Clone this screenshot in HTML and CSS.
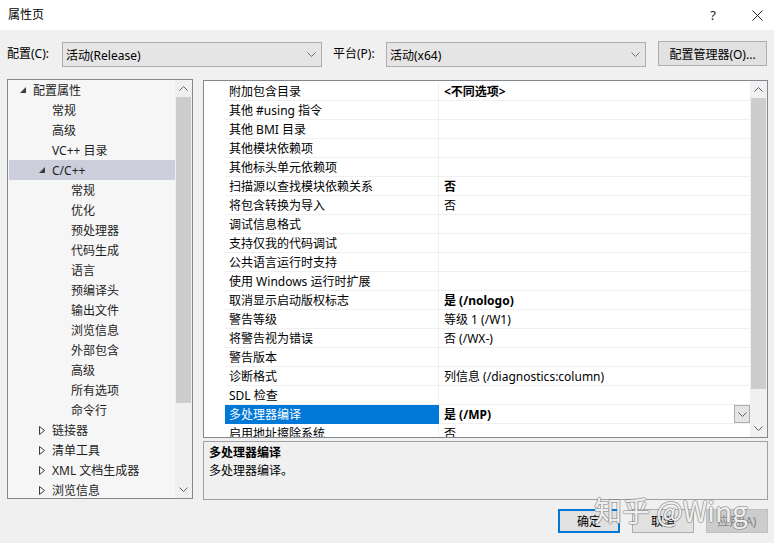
FILE: index.html
```html
<!DOCTYPE html>
<html lang="zh-CN">
<head>
<meta charset="utf-8">
<title>属性页</title>
<link rel="stylesheet" href="styles.css">
</head>
<body>
<div class="window">
  <div class="titlebar">
    <span class="title">属性页</span>
    <span class="tb-help">?</span>
    <span class="tb-close"><svg width="11" height="11" viewBox="0 0 11 11"><path d="M0.5 0.5 L10.5 10.5 M10.5 0.5 L0.5 10.5" stroke="#222" stroke-width="1" fill="none"/></svg></span>
  </div>
  <div class="body">
    <div class="toolbar">
      <span class="lbl lbl-config">配置(C):</span>
      <div class="combo"><span class="combo-text">活动(Release)</span><svg class="chev" width="9" height="5" viewBox="0 0 9 5"><polyline points="0.5,0.5 4.5,4.5 8.5,0.5" stroke="#707070" fill="none"/></svg></div>
      <span class="lbl lbl-platform">平台(P):</span>
      <div class="combo"><span class="combo-text">活动(x64)</span><svg class="chev" width="9" height="5" viewBox="0 0 9 5"><polyline points="0.5,0.5 4.5,4.5 8.5,0.5" stroke="#707070" fill="none"/></svg></div>
      <button class="btn btn-mgr">配置管理器(O)...</button>
    </div>
    <div class="content">
      <div class="tree">
        <div class="tree-rows">
          <div class="trow l0"><span class="tog"><svg width="6" height="6" viewBox="0 0 6 6"><polygon points="6,0 6,6 0,6" fill="#3c3c3c"/></svg></span>配置属性</div>
          <div class="trow l1"><span class="tog"></span>常规</div>
          <div class="trow l1"><span class="tog"></span>高级</div>
          <div class="trow l1"><span class="tog"></span>VC++ 目录</div>
          <div class="trow l1 sel"><span class="tog"><svg width="6" height="6" viewBox="0 0 6 6"><polygon points="6,0 6,6 0,6" fill="#3c3c3c"/></svg></span>C/C++</div>
          <div class="trow l2"><span class="tog"></span>常规</div>
          <div class="trow l2"><span class="tog"></span>优化</div>
          <div class="trow l2"><span class="tog"></span>预处理器</div>
          <div class="trow l2"><span class="tog"></span>代码生成</div>
          <div class="trow l2"><span class="tog"></span>语言</div>
          <div class="trow l2"><span class="tog"></span>预编译头</div>
          <div class="trow l2"><span class="tog"></span>输出文件</div>
          <div class="trow l2"><span class="tog"></span>浏览信息</div>
          <div class="trow l2"><span class="tog"></span>外部包含</div>
          <div class="trow l2"><span class="tog"></span>高级</div>
          <div class="trow l2"><span class="tog"></span>所有选项</div>
          <div class="trow l2"><span class="tog"></span>命令行</div>
          <div class="trow l1"><span class="tog"><svg width="6" height="9" viewBox="0 0 6 9"><polygon points="0.5,0.5 5.5,4.5 0.5,8.5" fill="none" stroke="#3c3c3c"/></svg></span>链接器</div>
          <div class="trow l1"><span class="tog"><svg width="6" height="9" viewBox="0 0 6 9"><polygon points="0.5,0.5 5.5,4.5 0.5,8.5" fill="none" stroke="#3c3c3c"/></svg></span>清单工具</div>
          <div class="trow l1"><span class="tog"><svg width="6" height="9" viewBox="0 0 6 9"><polygon points="0.5,0.5 5.5,4.5 0.5,8.5" fill="none" stroke="#3c3c3c"/></svg></span>XML 文档生成器</div>
          <div class="trow l1"><span class="tog"><svg width="6" height="9" viewBox="0 0 6 9"><polygon points="0.5,0.5 5.5,4.5 0.5,8.5" fill="none" stroke="#3c3c3c"/></svg></span>浏览信息</div>
        </div>
        <div class="vscroll tree-scroll">
          <div class="arrow"><svg width="9" height="5" viewBox="0 0 9 5"><polyline points="0.5,4.5 4.5,0.5 8.5,4.5" stroke="#606060" fill="none"/></svg></div>
          <div class="thumb tree-thumb"></div>
          <div class="track"></div>
          <div class="arrow"><svg width="9" height="5" viewBox="0 0 9 5"><polyline points="0.5,0.5 4.5,4.5 8.5,0.5" stroke="#606060" fill="none"/></svg></div>
        </div>
      </div>
      <div class="right">
        <div class="grid">
          <div class="grid-rows">
            <div class="grow"><span class="gut"></span><span class="gname">附加包含目录</span><span class="gval b">&lt;不同选项&gt;</span></div>
            <div class="grow"><span class="gut"></span><span class="gname">其他 #using 指令</span><span class="gval"></span></div>
            <div class="grow"><span class="gut"></span><span class="gname">其他 BMI 目录</span><span class="gval"></span></div>
            <div class="grow"><span class="gut"></span><span class="gname">其他模块依赖项</span><span class="gval"></span></div>
            <div class="grow"><span class="gut"></span><span class="gname">其他标头单元依赖项</span><span class="gval"></span></div>
            <div class="grow"><span class="gut"></span><span class="gname">扫描源以查找模块依赖关系</span><span class="gval b">否</span></div>
            <div class="grow"><span class="gut"></span><span class="gname">将包含转换为导入</span><span class="gval">否</span></div>
            <div class="grow"><span class="gut"></span><span class="gname">调试信息格式</span><span class="gval"></span></div>
            <div class="grow"><span class="gut"></span><span class="gname">支持仅我的代码调试</span><span class="gval"></span></div>
            <div class="grow"><span class="gut"></span><span class="gname">公共语言运行时支持</span><span class="gval"></span></div>
            <div class="grow"><span class="gut"></span><span class="gname">使用 Windows 运行时扩展</span><span class="gval"></span></div>
            <div class="grow"><span class="gut"></span><span class="gname">取消显示启动版权标志</span><span class="gval b">是 (/nologo)</span></div>
            <div class="grow"><span class="gut"></span><span class="gname">警告等级</span><span class="gval">等级 1 (/W1)</span></div>
            <div class="grow"><span class="gut"></span><span class="gname">将警告视为错误</span><span class="gval">否 (/WX-)</span></div>
            <div class="grow"><span class="gut"></span><span class="gname">警告版本</span><span class="gval"></span></div>
            <div class="grow"><span class="gut"></span><span class="gname">诊断格式</span><span class="gval">列信息 (/diagnostics:column)</span></div>
            <div class="grow"><span class="gut"></span><span class="gname">SDL 检查</span><span class="gval"></span></div>
            <div class="grow sel"><span class="gut"></span><span class="gname">多处理器编译</span><span class="gval b"><span class="vtext">是 (/MP)</span><span class="ddbtn"><svg width="9" height="5" viewBox="0 0 9 5"><polyline points="0.5,0.5 4.5,4.5 8.5,0.5" stroke="#606060" fill="none"/></svg></span></span></div>
            <div class="grow"><span class="gut"></span><span class="gname">启用地址擦除系统</span><span class="gval">否</span></div>
          </div>
          <div class="vscroll grid-scroll">
            <div class="arrow"><svg width="9" height="5" viewBox="0 0 9 5"><polyline points="0.5,4.5 4.5,0.5 8.5,4.5" stroke="#606060" fill="none"/></svg></div>
            <div class="thumb grid-thumb"></div>
            <div class="track"></div>
            <div class="arrow"><svg width="9" height="5" viewBox="0 0 9 5"><polyline points="0.5,0.5 4.5,4.5 8.5,0.5" stroke="#606060" fill="none"/></svg></div>
          </div>
        </div>
        <div class="desc">
          <div class="desc-title">多处理器编译</div>
          <div class="desc-text">多处理器编译。</div>
        </div>
      </div>
    </div>
    <div class="footer">
      <button class="btn btn-ok">确定</button>
      <button class="btn">取消</button>
      <button class="btn btn-dis">应用(A)</button>
    </div>
  </div>
  <div class="watermark">知乎 @Wing</div>
</div>
</body>
</html>
```

FILE: styles.css
```css
* { box-sizing: border-box; margin: 0; padding: 0; }
html, body { width: 774px; height: 543px; overflow: hidden; }
body {
  font-family: "Noto Sans", "Noto Sans CJK SC", sans-serif;
  font-size: 12px;
  color: #000;
  background: #f0f0f0;
}
.window { position: relative; width: 774px; height: 543px; display: flex; flex-direction: column; }

.titlebar { height: 30px; background: #fff; display: flex; align-items: center; padding-left: 8px; padding-right: 7px; }
.title { flex: 1; line-height: 16px; }
.tb-help { width: 20px; text-align: center; font-size: 13px; color: #222; margin-right: 24px; }
.tb-close { width: 20px; display: flex; justify-content: center; }

.body { flex: 1; display: flex; flex-direction: column; padding: 0 6px 0 7px; }

.toolbar { display: flex; align-items: flex-start; margin-top: 11px; height: 26px; }
.lbl { line-height: 26px; }
.lbl-config { width: 55px; }
.lbl-platform { width: 53px; margin-left: 11px; }
.combo {
  width: 260px; height: 25px; margin-top: 1px;
  background: #e5e5e5; border: 1px solid #adadad;
  display: flex; align-items: center; padding-left: 3px; padding-right: 5px;
}
.combo-text { flex: 1; }
.btn {
  font-family: inherit; font-size: 12px; color: #000;
  background: #e1e1e1; border: 1px solid #adadad;
  height: 24px; width: 62px;
}
.btn-mgr { width: 109px; height: 25px; margin-left: 12px; }

.content { display: flex; gap: 10px; margin-top: 12px; height: 421px; }

.tree { width: 186px; height: 420px; border: 1px solid #828790; background: #f6f6f6; display: flex; }
.tree-rows { flex: 1; overflow: hidden; color: #1e1e1e; }
.trow { height: 20px; display: flex; align-items: center; white-space: nowrap; }
.trow.l0 { padding-left: 10px; }
.trow.l1 { padding-left: 29px; }
.trow.l2 { padding-left: 48px; }
.trow.sel { background: #cccedb; margin-left: 1px; padding-left: 28px; }
.tog { width: 15px; height: 20px; display: flex; align-items: center; padding-left: 2px; flex: none; }

.vscroll { width: 17px; background: #f0f0f0; display: flex; flex-direction: column; align-items: center; flex: none; }
.arrow { height: 17px; width: 17px; display: flex; align-items: center; justify-content: center; flex: none; }
.thumb { width: 15px; background: #cdcdcd; flex: none; }
.track { flex: 1; }
.tree-thumb { height: 306px; }
.grid-thumb { height: 291px; }

.right { width: 565px; display: flex; flex-direction: column; gap: 3px; }
.grid { margin-top: 1px; height: 358px; border: 1px solid #828790; background: #fff; display: flex; }
.grid-rows { flex: 1; overflow: hidden; padding-top: 1px; }
.grow { height: 19px; display: flex; white-space: nowrap; }
.gut { width: 21px; flex: none; }
.gname {
  width: 214px; flex: none; padding-left: 4px; line-height: 19px;
  border-bottom: 1px solid #f0f0f0; border-right: 1px solid #f0f0f0;
}
.gval { flex: 1; padding-left: 5px; line-height: 19px; border-bottom: 1px solid #f0f0f0; display: flex; align-items: center; }
.gval.b { font-weight: bold; }
.grow.sel .gname { background: #0078d7; color: #fff; border-color: #0078d7; }
.vtext { flex: 1; }
.ddbtn {
  width: 16px; height: 18px; background: #e5e5e5; border: 1px solid #adadad;
  display: flex; align-items: center; justify-content: center;
}

.desc { height: 60px; border: 1px solid #a0a0a0; background: #f0f0f0; padding: 2px 5px; }
.desc-title { font-weight: bold; line-height: 18px; }
.desc-text { line-height: 18px; }

.footer { display: flex; justify-content: flex-end; gap: 12px; margin-top: 9px; }
.btn-ok { border: 2px solid #0078d7; }
.btn-dis { background: #cccccc; border-color: #bfbfbf; color: #838383; }

.watermark {
  position: absolute; left: 594px; top: 490px;
  font-family: "Noto Sans CJK SC", "Noto Sans", sans-serif;
  font-size: 28px; line-height: 40px; font-weight: normal;
  color: rgba(255, 255, 255, 0.9);
  text-shadow: 1px 0 rgba(120, 120, 120, 0.55), -1px 0 rgba(120, 120, 120, 0.55), 0 1px rgba(120, 120, 120, 0.55), 0 -1px rgba(120, 120, 120, 0.55);
  white-space: nowrap; pointer-events: none;
}
```
